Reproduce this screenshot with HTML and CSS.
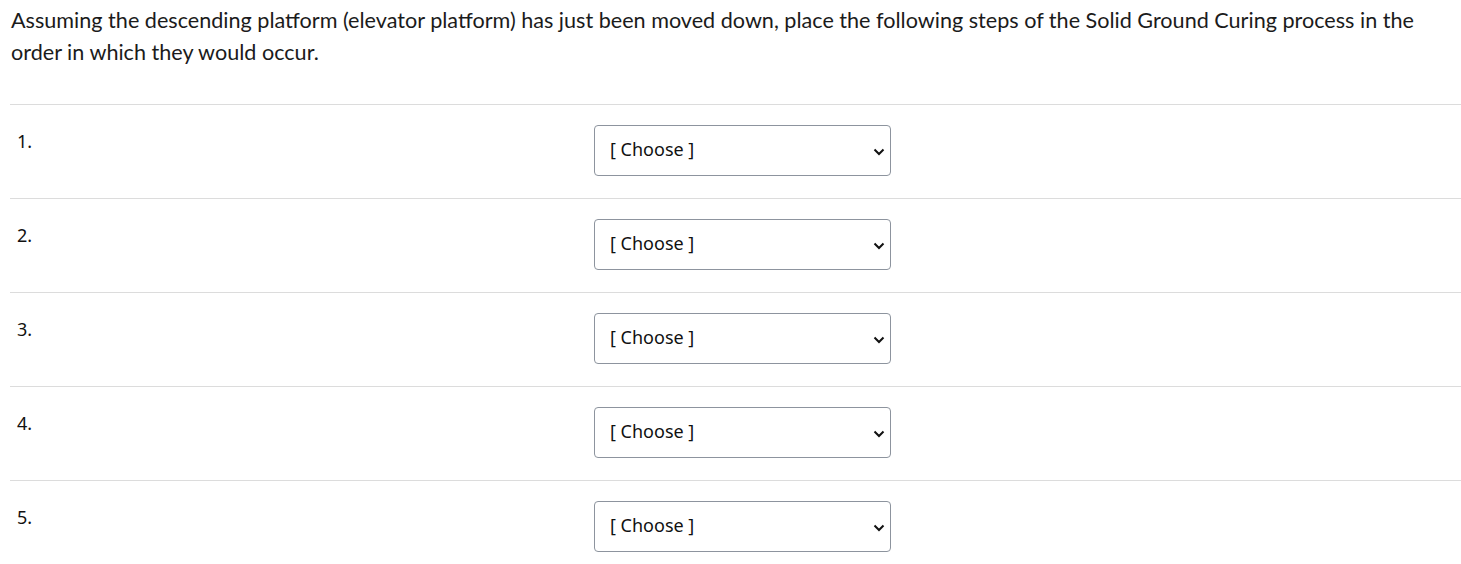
FILE: index.html
```html
<!DOCTYPE html>
<html>
<head>
<meta charset="utf-8">
<link rel="stylesheet" href="styles.css">
</head>
<body>
<div class="page">
  <p class="question">Assuming the descending platform (elevator platform) has just been moved down, place the following steps of the Solid Ground Curing process in the order in which they would occur.</p>
  <div class="rows">
    <div class="row"><div class="num">1.</div><div class="cell"><div class="select"><span class="val">[ Choose ]</span><svg class="chev" width="12" height="8" viewBox="0 0 12 8"><path d="M1.5 1.5 L6 6 L10.5 1.5" fill="none" stroke="#111" stroke-width="2"/></svg></div></div></div>
    <div class="row"><div class="num">2.</div><div class="cell"><div class="select"><span class="val">[ Choose ]</span><svg class="chev" width="12" height="8" viewBox="0 0 12 8"><path d="M1.5 1.5 L6 6 L10.5 1.5" fill="none" stroke="#111" stroke-width="2"/></svg></div></div></div>
    <div class="row"><div class="num">3.</div><div class="cell"><div class="select"><span class="val">[ Choose ]</span><svg class="chev" width="12" height="8" viewBox="0 0 12 8"><path d="M1.5 1.5 L6 6 L10.5 1.5" fill="none" stroke="#111" stroke-width="2"/></svg></div></div></div>
    <div class="row"><div class="num">4.</div><div class="cell"><div class="select"><span class="val">[ Choose ]</span><svg class="chev" width="12" height="8" viewBox="0 0 12 8"><path d="M1.5 1.5 L6 6 L10.5 1.5" fill="none" stroke="#111" stroke-width="2"/></svg></div></div></div>
    <div class="row"><div class="num">5.</div><div class="cell"><div class="select"><span class="val">[ Choose ]</span><svg class="chev" width="12" height="8" viewBox="0 0 12 8"><path d="M1.5 1.5 L6 6 L10.5 1.5" fill="none" stroke="#111" stroke-width="2"/></svg></div></div></div>
  </div>
</div>
</body>
</html>
```
FILE: styles.css
```css
html, body { margin: 0; padding: 0; background: #fff; }
.page { padding: 4px 0 0 10px; color: #111; }
.question {
  margin: 0 0 36px 1px;
  font-family: Lato, "Liberation Sans", sans-serif;
  font-size: 21.6px;
  line-height: 32px;
  color: #1b1b1b;
}
.row {
  border-top: 1px solid #dcdcdc;
  display: flex;
  height: 93px;
}
.num {
  width: 584px;
  padding: 26px 0 0 7px;
  box-sizing: border-box;
  font-family: "Noto Sans", "Open Sans", sans-serif;
  font-size: 18px;
  line-height: 20px;
  color: #111;
}
.cell { padding-top: 20px; }
.select {
  width: 297px;
  height: 51px;
  box-sizing: border-box;
  border: 1px solid #8d949e;
  border-radius: 4px;
  display: flex;
  align-items: center;
  justify-content: space-between;
  padding: 0 5px 0 15px;
  font-family: "Noto Sans", "Open Sans", sans-serif;
  font-size: 18px;
  color: #111;
}
.val { margin-top: -4px; }
.chev { margin-top: 2px; }
```
